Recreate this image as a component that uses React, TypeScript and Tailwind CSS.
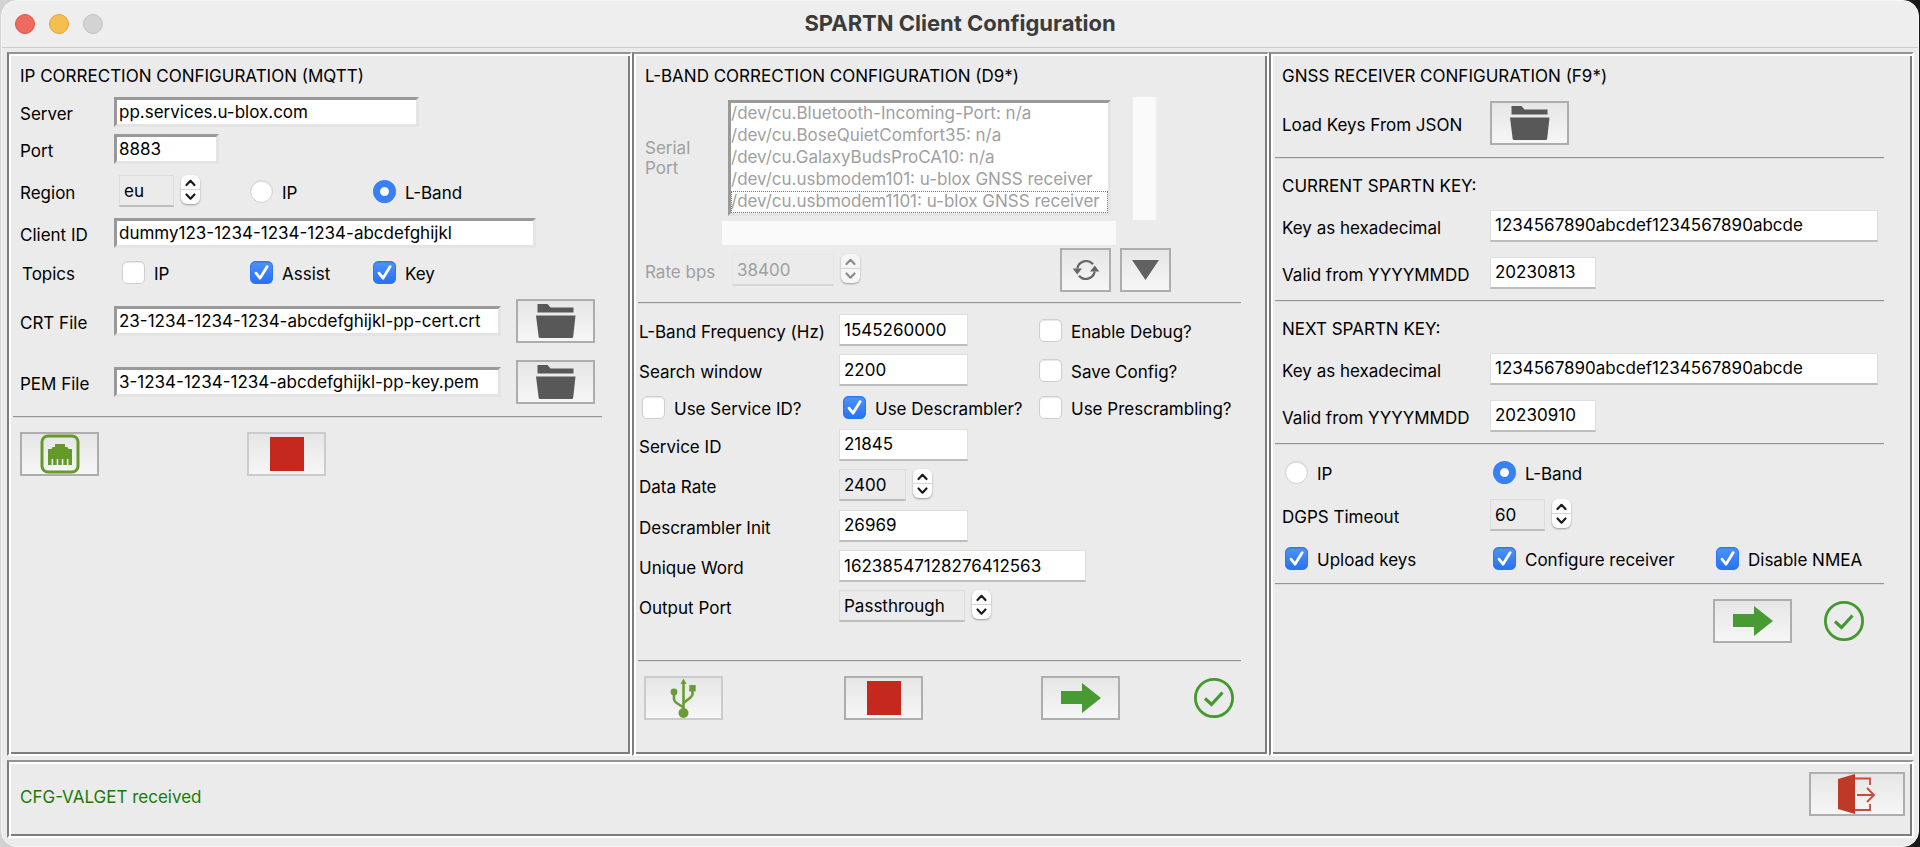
import type { ReactNode } from "react";
import clsx from "clsx";

const ports = [
  "/dev/cu.Bluetooth-Incoming-Port: n/a",
  "/dev/cu.BoseQuietComfort35: n/a",
  "/dev/cu.GalaxyBudsProCA10: n/a",
  "/dev/cu.usbmodem101: u-blox GNSS receiver",
  "/dev/cu.usbmodem1101: u-blox GNSS receiver",
];

/* Grooved frame, like a Tk labelframe */
function Frame({ children, className }: { children: ReactNode; className?: string }) {
  return (
    <div
      className={clsx(
        "border-2 border-t-[#949494] border-l-[#7d7d7d] border-r-white border-b-white shadow-[inset_2px_2px_0_#fff,inset_-2px_-2px_0_#7d7d7d]",
        className,
      )}
    >
      {children}
    </div>
  );
}

function Row({ children, className }: { children: ReactNode; className?: string }) {
  return <div className={clsx("flex items-center", className)}>{children}</div>;
}

function Label({ id, children, className }: { id: string; children: ReactNode; className?: string }) {
  return (
    <label htmlFor={id} className={clsx("shrink-0 pt-1 whitespace-nowrap", className)}>
      {children}
    </label>
  );
}

function SunkenInput({ id, value, className }: { id: string; value: string; className: string }) {
  return (
    <input
      id={id}
      defaultValue={value}
      className={clsx(
        "h-[30px] shrink-0 border-t-3 border-r-3 border-b-3 border-l-3 border-t-[#999] border-l-[#999] border-r-[#e4e4e4] border-b-[#e4e4e4] bg-white pl-[2px] outline-none",
        className,
      )}
    />
  );
}

function FlatInput({ id, value, className }: { id: string; value: string; className: string }) {
  return (
    <input
      id={id}
      defaultValue={value}
      className={clsx(
        "h-8 shrink-0 border border-[#dedede] border-b-2 border-b-[#bdbdbd] bg-white pl-1 outline-none",
        className,
      )}
    />
  );
}

function Chevron({ down }: { down?: boolean }) {
  return (
    <svg viewBox="0 0 19 14" className="h-[14px] w-[19px]" fill="none" stroke="currentColor" strokeWidth="2.2">
      <path d={down ? "M5.5 4.5 9.5 8.7 13.5 4.5" : "M5.5 10 9.5 5.8 13.5 10"} strokeLinecap="round" strokeLinejoin="round" />
    </svg>
  );
}

function Spinner({ id, value, className, disabled }: { id: string; value: string; className: string; disabled?: boolean }) {
  return (
    <div className="flex shrink-0 items-center gap-[7px]">
      <input
        id={id}
        defaultValue={value}
        disabled={disabled}
        className={clsx(
          "h-8 border border-b-2 pl-1 outline-none",
          disabled ? "border-[#e6e6e6] border-b-[#d6d6d6] text-[#a0a0a0]" : "border-[#dcdcdc] border-b-[#bdbdbd]",
          className,
        )}
      />
      <div
        className={clsx(
          "mb-1 flex flex-col divide-y divide-[#d4d4d4] overflow-hidden rounded-md shadow-[0_1px_2px_rgba(0,0,0,0.35)]",
          disabled ? "bg-[#f6f6f6] text-[#8c8c8c]" : "bg-white text-[#1c1c1c]",
        )}
      >
        <button type="button" disabled={disabled} aria-label="Increase"><Chevron /></button>
        <button type="button" disabled={disabled} aria-label="Decrease"><Chevron down /></button>
      </div>
    </div>
  );
}

function Check({ label, checked, className }: { label: string; checked?: boolean; className?: string }) {
  return (
    <label className={clsx("flex shrink-0 items-center gap-[9px] whitespace-nowrap", className)}>
      <span className="relative block size-[23px]">
        <input
          type="checkbox"
          defaultChecked={checked}
          className="peer block size-[23px] appearance-none rounded-[5px] border border-[#cfcfcf] bg-white shadow-[inset_0_1px_1px_rgba(0,0,0,0.1)] checked:border-[#2f76f5] checked:bg-linear-to-b checked:from-[#4b93fa] checked:to-[#2a70f4]"
        />
        <svg viewBox="0 0 23 23" className="pointer-events-none absolute inset-0 hidden peer-checked:block" fill="none" stroke="white" strokeWidth="2.8">
          <path d="M6 12.2 10 17.2 17.2 5.6" strokeLinecap="round" strokeLinejoin="round" />
        </svg>
      </span>
      <span className="pt-1">{label}</span>
    </label>
  );
}

function Radio({ label, name, checked, className }: { label: string; name: string; checked?: boolean; className?: string }) {
  return (
    <label className={clsx("flex shrink-0 items-center gap-[9px] whitespace-nowrap", className)}>
      <input
        type="radio"
        name={name}
        defaultChecked={checked}
        className="block size-[23px] appearance-none rounded-full border border-[#cfcfcf] bg-white shadow-[inset_0_1px_1px_rgba(0,0,0,0.1)] checked:border-[7px] checked:border-[#3880f6]"
      />
      <span className="pt-1">{label}</span>
    </label>
  );
}

function IconButton({ label, children, className, muted }: { label: string; children: ReactNode; className?: string; muted?: boolean }) {
  return (
    <button
      type="button"
      aria-label={label}
      className={clsx(
        "flex h-11 shrink-0 items-center justify-center border-2 bg-linear-to-b from-[#e6e6e6] to-[#f6f6f6]",
        muted ? "border-[#cbcbcb]" : "border-[#adadad]",
        className ?? "w-[79px]",
      )}
    >
      {children}
    </button>
  );
}

function FolderIcon() {
  return (
    <svg viewBox="0 0 40 36" className="h-9 w-10" fill="#585858">
      <path d="M1.500 1h10l3 3.500h23V9.500h-36z" />
      <path d="M0 12.500h39.500L37.200 33.500q-.2 1.500-1.600 1.500H4.200q-1.400 0-1.600-1.500z" />
    </svg>
  );
}

function StopIcon() {
  return (
    <svg viewBox="0 0 34 34" className="size-[34px]">
      <rect width="34" height="34" fill="#c5281c" />
    </svg>
  );
}

function ArrowIcon() {
  return (
    <svg viewBox="0 0 40 32" className="h-8 w-10" fill="#489b33">
      <path d="M0 9h21V1l19 15-19 15v-9H0z" />
    </svg>
  );
}

function OkIcon() {
  return (
    <svg viewBox="0 0 40 40" className="size-10 shrink-0" fill="none" stroke="#43992f">
      <circle cx="20" cy="20" r="18.6" strokeWidth="2.8" />
      <path d="M11 20.500 17.500 26.500 28.500 14.500" strokeWidth="3.2" />
    </svg>
  );
}

function EthernetIcon() {
  return (
    <svg viewBox="0 0 40 40" className="size-10" fill="none">
      <rect x="2" y="2" width="36" height="36" rx="6" stroke="#659a2a" strokeWidth="3" />
      <path
        d="M8 31V15h3.500l1-2H15v-3h10v3h2.500l1 2H32v16h-3.600v-6h-1.500v6h-3.600v-6h-1.500v6h-3.600v-6h-1.500v6h-3.600v-6h-1.500v6z"
        fill="#659a2a"
      />
    </svg>
  );
}

function UsbIcon() {
  return (
    <svg viewBox="0 0 40 40" className="size-10" fill="none" stroke="#6a9c35" strokeWidth="2.6">
      <path d="M19.500 34V4" />
      <path d="M19.500 29.500 12 24.500Q10 23 10 21V14" />
      <path d="M19.500 25 26.500 19.500Q28.500 18 28.500 16V10" />
      <path d="M16.500 6 19.500 0.500 22.500 6z" fill="#6a9c35" stroke="none" />
      <circle cx="10" cy="14" r="3.400" fill="#6a9c35" stroke="none" />
      <path d="M25.300 7h6.400v6.400h-6.400z" fill="#6a9c35" stroke="none" />
      <circle cx="19.500" cy="35" r="5" fill="#6a9c35" stroke="none" />
    </svg>
  );
}

function RefreshIcon() {
  return (
    <svg viewBox="0 0 28 22" className="h-[22px] w-7" fill="none" stroke="#666" strokeWidth="2.2">
      <path d="M21 5.200A9 9 0 0 0 5.300 9.500M7 16.800A9 9 0 0 0 22.700 12.500" />
      <path d="M0.800 9.500H10L5.200 15.500zM18 12.500h9.200L22.800 6.500z" fill="#666" stroke="none" />
    </svg>
  );
}

function ExitIcon() {
  return (
    <svg viewBox="0 0 38 42" className="h-[42px] w-[38px]" fill="none" stroke="#c94a38" strokeWidth="1.8">
      <path d="M0 6 17 1v40L0 36z" fill="#be3a28" stroke="none" />
      <path d="M17 5.500H32V12M32 31v6H17M19 22H36M29 15 36 22 29 29" />
    </svg>
  );
}

function Rule({ className }: { className?: string }) {
  return <hr className={clsx("border-t border-b border-t-[#939393] border-b-[#dcdcdc]", className)} />;
}

function IpPanel() {
  return (
    <Frame className="pl-[11px]">
      <h2 className="mt-3 h-6">IP CORRECTION CONFIGURATION (MQTT)</h2>
      <Row className="mt-[3px] h-[38px]">
        <Label id="server" className="w-[94px]">Server</Label>
        <SunkenInput id="server" value="pp.services.u-blox.com" className="w-[305px]" />
      </Row>
      <Row className="h-9">
        <Label id="port" className="w-[94px]">Port</Label>
        <SunkenInput id="port" value="8883" className="w-[105px]" />
      </Row>
      <Row className="h-12">
        <Label id="region" className="w-[99px]">Region</Label>
        <Spinner id="region" value="eu" className="w-[55px]" />
        <Radio label="IP" name="source" className="ml-[50px] w-[123px]" />
        <Radio label="L-Band" name="source" checked />
      </Row>
      <Row className="h-9">
        <Label id="client" className="w-[94px]">Client ID</Label>
        <SunkenInput id="client" value="dummy123-1234-1234-1234-abcdefghijkl" className="w-[422px]" />
      </Row>
      <Row className="h-[42px]">
        <span className="w-[102px] shrink-0 pt-1 pl-[2px]">Topics</span>
        <Check label="IP" className="w-[128px]" />
        <Check label="Assist" checked className="w-[123px]" />
        <Check label="Key" checked />
      </Row>
      <Row className="h-14">
        <Label id="crt" className="w-[94px]">CRT File</Label>
        <SunkenInput id="crt" value="23-1234-1234-1234-abcdefghijkl-pp-cert.crt" className="mr-[15px] w-[387px]" />
        <IconButton label="Select CRT file"><FolderIcon /></IconButton>
      </Row>
      <Row className="h-[66px]">
        <Label id="pem" className="w-[94px]">PEM File</Label>
        <SunkenInput id="pem" value="3-1234-1234-1234-abcdefghijkl-pp-key.pem" className="mr-[15px] w-[387px]" />
        <IconButton label="Select PEM file"><FolderIcon /></IconButton>
      </Row>
      <Rule className="mt-px mr-7 -ml-[7px]" />
      <Row className="mt-[14px] gap-[148px]">
        <IconButton label="Connect"><EthernetIcon /></IconButton>
        <IconButton label="Disconnect" muted><StopIcon /></IconButton>
      </Row>
    </Frame>
  );
}

function LBandPanel() {
  return (
    <Frame className="pr-[26px] pl-1">
      <h2 className="mt-3 ml-[7px] h-6">L-BAND CORRECTION CONFIGURATION (D9*)</h2>
      <div className="mt-[7px] ml-[7px] flex">
        <div>
          <div className="flex items-center pt-[3px]">
            <label htmlFor="serial" className="w-[83px] text-[#a0a0a0]">Serial<br />Port</label>
            <select
              id="serial"
              size={5}
              disabled
              className="h-[116px] w-[383px] overflow-hidden border-t-3 border-r-3 border-b-3 border-l-3 border-t-[#999] border-l-[#999] border-r-[#e4e4e4] border-b-[#e4e4e4] bg-white opacity-100 outline-none"
            >
              {ports.map((p, i) => (
                <option
                  key={p}
                  className={clsx(
                    "h-[22px] min-h-[22px] p-0 text-[#a0a0a0]",
                    i === ports.length - 1 && "outline-1 -outline-offset-1 outline-dotted outline-[#777]",
                  )}
                >
                  {p}
                </option>
              ))}
            </select>
          </div>
          <div className="mt-[5px] ml-[77px] h-6 w-[394px] bg-[#fafafa]" />
        </div>
        <div className="ml-[17px] h-[123px] w-6 border-r-2 border-[#f2f2f2] bg-[#fafafa]" />
      </div>
      <Row className="mt-1 ml-[7px] h-[42px]">
        <Label id="rate" className="w-[87px] text-[#a0a0a0]">Rate bps</Label>
        <Spinner id="rate" value="38400" className="w-[102px]" disabled />
        <IconButton label="Refresh ports" className="mr-[9px] ml-[200px] h-10 w-[51px]"><RefreshIcon /></IconButton>
        <IconButton label="Show settings" className="h-10 w-[51px]">
          <svg viewBox="0 0 27 20" className="h-5 w-[27px]"><path d="M0 0h27L13.500 20z" fill="#616161" /></svg>
        </IconButton>
      </Row>
      <Rule className="mt-[11px]" />
      <div className="mt-[6px] grid grid-cols-[200px_200px_1fr] pl-px">
        <Row className="h-10"><Label id="freq">L-Band Frequency (Hz)</Label></Row>
        <FlatInput id="freq" value="1545260000" className="mt-1 w-[129px]" />
        <Check label="Enable Debug?" />
        <Row className="h-10"><Label id="search">Search window</Label></Row>
        <FlatInput id="search" value="2200" className="mt-1 w-[129px]" />
        <Check label="Save Config?" />
        <Check label="Use Service ID?" className="h-[34px] pl-[3px]" />
        <Check label="Use Descrambler?" checked className="pl-1" />
        <Check label="Use Prescrambling?" />
      </div>
      <div className="pl-px">
        <Row className="h-[41px]">
          <Label id="service" className="w-[200px]">Service ID</Label>
          <FlatInput id="service" value="21845" className="w-[129px]" />
        </Row>
        <Row className="h-10">
          <Label id="datarate" className="w-[200px]">Data Rate</Label>
          <Spinner id="datarate" value="2400" className="w-[67px]" />
        </Row>
        <Row className="h-[41px]">
          <Label id="descrambler" className="w-[200px]">Descrambler Init</Label>
          <FlatInput id="descrambler" value="26969" className="w-[129px]" />
        </Row>
        <Row className="h-10">
          <Label id="unique" className="w-[200px]">Unique Word</Label>
          <FlatInput id="unique" value="16238547128276412563" className="w-[247px]" />
        </Row>
        <Row className="h-10">
          <Label id="output" className="w-[200px]">Output Port</Label>
          <Spinner id="output" value="Passthrough" className="w-[126px]" />
        </Row>
      </div>
      <Rule className="mt-[34px]" />
      <Row className="mt-[14px] pl-[6px]">
        <IconButton label="Connect" muted><UsbIcon /></IconButton>
        <IconButton label="Disconnect" className="ml-[121px] w-[79px]"><StopIcon /></IconButton>
        <IconButton label="Send configuration" className="mr-[74px] ml-[118px] w-[79px]"><ArrowIcon /></IconButton>
        <OkIcon />
      </Row>
    </Frame>
  );
}

function KeyFields({ title, prefix, date }: { title: string; prefix: string; date: string }) {
  return (
    <div className="pl-[7px]">
      <h3 className="mt-[17px] h-6">{title}</h3>
      <Row className="mt-[2px] h-[47px]">
        <Label id={prefix + "-key"} className="w-[208px]">Key as hexadecimal</Label>
        <FlatInput id={prefix + "-key"} value="1234567890abcdef1234567890abcde" className="w-[388px]" />
      </Row>
      <Row className="h-[47px]">
        <Label id={prefix + "-date"} className="w-[208px]">Valid from YYYYMMDD</Label>
        <FlatInput id={prefix + "-date"} value={date} className="w-[106px]" />
      </Row>
    </div>
  );
}

function GnssPanel() {
  return (
    <Frame className="pr-7 pl-1">
      <h2 className="mt-3 ml-[7px] h-6">GNSS RECEIVER CONFIGURATION (F9*)</h2>
      <Row className="mt-[11px] ml-[7px]">
        <span className="w-[208px] pt-1">Load Keys From JSON</span>
        <IconButton label="Load keys from JSON"><FolderIcon /></IconButton>
      </Row>
      <Rule className="mt-3" />
      <KeyFields title="CURRENT SPARTN KEY:" prefix="current" date="20230813" />
      <Rule className="mt-1" />
      <KeyFields title="NEXT SPARTN KEY:" prefix="next" date="20230910" />
      <Rule className="mt-1" />
      <Row className="mt-[9px] h-9 pl-[10px]">
        <Radio label="IP" name="gnss" className="w-[208px]" />
        <Radio label="L-Band" name="gnss" checked />
      </Row>
      <Row className="h-[50px] pl-[7px]">
        <Label id="dgps" className="w-[208px]">DGPS Timeout</Label>
        <Spinner id="dgps" value="60" className="w-[55px]" />
      </Row>
      <Row className="h-9 pl-[10px]">
        <Check label="Upload keys" checked className="w-[208px]" />
        <Check label="Configure receiver" checked className="w-[223px]" />
        <Check label="Disable NMEA" checked />
      </Row>
      <Rule className="mt-[7px]" />
      <Row className="mt-[14px] justify-end pr-5">
        <IconButton label="Send configuration" className="mr-8 w-[79px]"><ArrowIcon /></IconButton>
        <OkIcon />
      </Row>
    </Frame>
  );
}

export default function App() {
  return (
    <div className="min-h-screen bg-linear-to-r from-[#d2d2d2] from-90% to-[#161616] px-px font-[Inter,sans-serif] text-[17px] leading-5 text-black">
      <main className="flex min-h-screen flex-col rounded-[16px] border border-[#f7f7f7] bg-[#ebebeb]">
        <header className="flex h-[47px] items-center rounded-t-[16px] border-b border-[#cbcbcb] bg-[#eee] px-[13px]">
          <div className="flex flex-1 gap-[14px]">
            <button type="button" aria-label="Close" className="size-5 rounded-full border border-[#d95548] bg-[#ed6a5e]" />
            <button type="button" aria-label="Minimize" className="size-5 rounded-full border border-[#dda43a] bg-[#f5bf4f]" />
            <button type="button" aria-label="Zoom" disabled className="size-5 rounded-full border border-[#c2c2c2] bg-[#d3d3d3]" />
          </div>
          <h1 className="pb-[2px] text-[22px] font-bold text-[#3b3b3b]">SPARTN Client Configuration</h1>
          <div className="flex-1" />
        </header>
        <div className="mt-1 mr-1 ml-[5px] grid flex-1 grid-cols-[625fr_637fr_645fr]">
          <IpPanel />
          <LBandPanel />
          <GnssPanel />
        </div>
        <Frame className="mt-1 mr-1 mb-2 ml-[5px] flex h-[78px] items-center justify-between pr-[7px] pl-[11px]">
          <p className="pb-1 text-[#1a7a08]" role="status">CFG-VALGET received</p>
          <IconButton label="Exit" className="mb-[10px] w-24"><ExitIcon /></IconButton>
        </Frame>
      </main>
    </div>
  );
}
